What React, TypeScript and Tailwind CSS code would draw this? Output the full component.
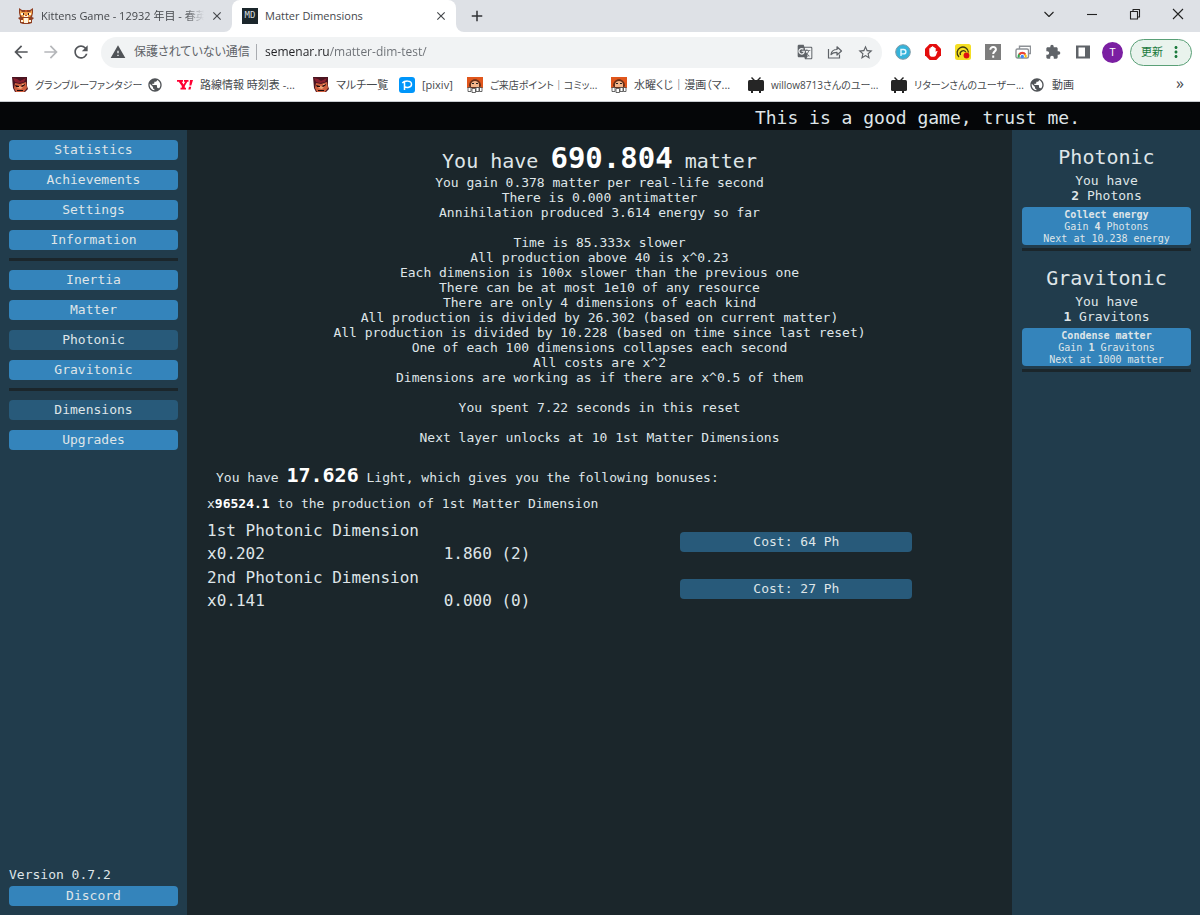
import type { ReactNode } from "react";
import {
  MdAdd,
  MdArrowBack,
  MdArrowForward,
  MdClose,
  MdExtension,
  MdGTranslate,
  MdMoreVert,
  MdPublic,
  MdRefresh,
  MdStarBorder,
  MdWarning,
} from "react-icons/md";

// ---------- Icons ----------

function CatIcon() {
  return (
    <svg viewBox="0 0 16 16" className="size-4 shrink-0">
      <path fill="#8f3f22" d="M1 0l3 2h8l3-2v5l-1 4 2 1-2 2v3l-3 1H5l-3-1v-3l-2-2 2-1-1-4z" />
      <path fill="#f0a04b" d="M2 2l2 2h8l2-2v4l-2 3H4L2 6zM5 10h6v4H5z" />
      <path fill="#fff3dc" d="M3 5h3v2H3zM10 5h3v2h-3zM6 7h4v2H6zM6 10h4v5H6zM3 12h2v2H3zM11 12h2v2h-2z" />
      <path fill="#c2512b" d="M7 2h2v2H7zM7 7h2v1H7z" />
      <path fill="#3b1a10" d="M5 5h1v2H5zM10 5h1v2h-1z" />
    </svg>
  );
}

function DemonIcon() {
  return (
    <svg viewBox="0 0 16 16" className="size-4 shrink-0">
      <path fill="#4a1420" d="M0 0h15v9l1 3-3 3H3l-2-4z" />
      <path fill="#d0603f" d="M3 6l5 1 6-2 1 6-3 4H4l-2-4z" />
      <path fill="#8c1f2e" d="M1 1l4 1 3 2 6-3-2 4-5 1-4-1z" />
      <path fill="#f0a67a" d="M5 11l2-2 4 1-2 2zM10 7h3v1h-3z" />
      <path fill="#1c0a0c" d="M3 8l4 1v1H4zM9 9l4-2v1l-3 2zM5 13h6v1H5z" />
    </svg>
  );
}

function YahooIcon() {
  return (
    <svg viewBox="0 0 16 16" className="size-4 shrink-0" fill="#ff0033">
      <path d="M0 3h6v1.800H4.800L6.500 7.500 8.200 4.800H7V3h4.500v1.800h-1.200L7.800 9v1.700H9V12.500H3.500v-1.800h1.300V9L1.800 4.800H0z" />
      <path d="M13 3h3l-1.700 5.500h-1.900zM12 9.800h2.200l-.7 2.700h-2.200z" />
    </svg>
  );
}

function PixivIcon() {
  return (
    <svg viewBox="0 0 16 16" className="size-4 shrink-0">
      <rect width="16" height="16" rx="3" fill="#0096fa" />
      <path d="M5.500 13V4.300M3.300 6c2-2.400 9.200-3 9.200 1.200 0 3.600-4.800 3.900-7 2.500" fill="none" stroke="#fff" strokeWidth="1.500" />
    </svg>
  );
}

function MangaIcon() {
  return (
    <svg viewBox="0 0 16 16" className="size-4 shrink-0">
      <path fill="#e0561c" d="M0 0h16v11H0z" />
      <path fill="#6a3018" d="M2 9c0-9 12-9 12 0l-2 2H4z" />
      <path fill="#f3b58a" d="M4 7c1-4 7-4 8 0v3H4z" />
      <path fill="#222" d="M5 6h2v1H5zM9 6h2v1H9z" />
      <path fill="#fff" stroke="#444" strokeWidth=".8" d="M1 10.500h3v4H1zM5 11.500h3.500v4H5zM9 10.500h3v4H9zM12.500 10.500h2.500v4h-2.500z" />
    </svg>
  );
}

function TvIcon() {
  return (
    <svg viewBox="0 0 16 16" className="size-4 shrink-0" fill="#252525">
      <rect x="0" y="3" width="16" height="11" rx="1.500" />
      <path d="M3 1l1-1 3 3-1 1zM13 1l-1-1-3 3 1 1zM3 14h2v2H3zM11 14h2v2h-2z" />
    </svg>
  );
}

function GlobeIcon() {
  return <MdPublic className="size-4 shrink-0 text-[#505357]" />;
}

function ShareIcon() {
  return (
    <svg viewBox="0 0 16 16" className="size-4" fill="none" stroke="#5f6368" strokeWidth="1.200">
      <path d="M1.500 5v9h11v-3.500" />
      <path d="M4 10.500c.5-3.500 2.500-5 6-5V2.800l4.500 4.200L10 11V8.300c-3 0-4.500.5-6 2.200z" strokeLinejoin="round" />
    </svg>
  );
}

// ---------- Browser window ----------

const extensions: { name: string; icon: ReactNode }[] = [
  {
    name: "Pixiv",
    icon: (
      <svg viewBox="0 0 16 16" className="size-4">
        <circle cx="8" cy="8" r="7.300" fill="#35b3da" stroke="#7f9aa5" strokeWidth="1" />
        <path d="M6 12V5.500h2.700a2.200 2.200 0 0 1 0 4.400H6" fill="none" stroke="#e5f8ff" strokeWidth="1.400" />
      </svg>
    ),
  },
  {
    name: "AdBlock",
    icon: (
      <svg viewBox="0 0 16 16" className="size-4">
        <path fill="#e40d0d" d="M4.700 0h6.600L16 4.700v6.600L11.300 16H4.700L0 11.300V4.700z" />
        <path fill="#fff" d="M4.300 7.500V4.300h1.300V3h1.300v-.8h1.300V3h1.300v1h1.200v4l.9-.9h1L11 11.300c-.8 2-5.800 2.300-6.500-.6z" />
      </svg>
    ),
  },
  {
    name: "Recorder",
    icon: (
      <svg viewBox="0 0 16 16" className="size-4">
        <rect width="16" height="16" rx="2.500" fill="#f5df25" />
        <path d="M4 13a5.700 5.700 0 1 1 9.500-4.500M5.500 11a3 3 0 0 1 5.300-2.800" fill="none" stroke="#3f3a12" strokeWidth="1.300" />
        <circle cx="11.500" cy="11.500" r="2.900" fill="#de1010" />
      </svg>
    ),
  },
  {
    name: "Help",
    icon: (
      <svg viewBox="0 0 16 16" className="size-4">
        <path fill="#7d7d7d" d="M0 0h16v16H0z" />
        <path d="M5.300 5.800c0-4 5.600-3.400 5.600-.4 0 2-2.700 2-2.700 4.600M8.200 11.500v2.200" fill="none" stroke="#fff" strokeWidth="2" />
      </svg>
    ),
  },
  {
    name: "Cast",
    icon: (
      <svg viewBox="0 0 16 16" className="size-4">
        <path d="M4.500 5V2.200h11v7.300h-2" fill="none" stroke="#8d9196" strokeWidth="1.400" />
        <rect x="1" y="5" width="12.500" height="9" rx="1.500" fill="#fff" stroke="#8d9196" strokeWidth="1.400" />
        <path d="M3.800 13.500a3.500 3.500 0 0 1 1.500-4" fill="none" stroke="#2da94f" strokeWidth="2" />
        <path d="M4.300 10.500a3.500 3.500 0 0 1 6 0" fill="none" stroke="#ea4335" strokeWidth="2.200" />
        <path d="M10 10.500a3.500 3.500 0 0 1 .7 3" fill="none" stroke="#fbbc05" strokeWidth="2" />
        <circle cx="7.300" cy="12.500" r="1.700" fill="#4285f4" />
      </svg>
    ),
  },
  { name: "拡張機能", icon: <MdExtension className="size-4 text-[#5f6368]" /> },
  {
    name: "サイドパネル",
    icon: (
      <svg viewBox="0 0 16 16" className="size-4">
        <path fillRule="evenodd" fill="#5f6368" d="M1 1.500h14v13H1zM3.500 3.500v9H10v-9z" />
      </svg>
    ),
  },
];

const bookmarks: { label: string; icon: ReactNode; className: string }[] = [
  { label: "グランブルーファンタジー", icon: <DemonIcon />, className: "w-[135px] text-[10px]" },
  { label: "", icon: <GlobeIcon />, className: "w-[30px]" },
  { label: "路線情報 時刻表 -...", icon: <YahooIcon />, className: "w-[136px] text-[11px]" },
  { label: "マルチ一覧", icon: <DemonIcon />, className: "w-[86px] text-[11px]" },
  { label: "[pixiv]", icon: <PixivIcon />, className: "w-[68px] text-[11px]" },
  { label: "ご来店ポイント｜コミッ...", icon: <MangaIcon />, className: "w-[144px] text-[10px]" },
  { label: "水曜くじ｜漫画（マ...", icon: <MangaIcon />, className: "w-[137px] text-[11px]" },
  { label: "willow8713さんのユー...", icon: <TvIcon />, className: "w-[143px] text-[10px]" },
  { label: "リターンさんのユーザー...", icon: <TvIcon />, className: "w-[138px] text-[10px]" },
  { label: "動画", icon: <GlobeIcon />, className: "w-[60px] text-[11px]" },
];

function TabStrip() {
  return (
    <div className="flex h-8 bg-white text-[11px] text-[#45484c]">
      <div className="flex w-[232px] shrink-0 items-center rounded-br-lg bg-[#dee1e6] pl-[18px]">
        <CatIcon />
        <span className="ml-[7px] w-[168px] mask-r-from-85% mask-r-to-97% whitespace-nowrap">
          Kittens Game - 12932 年目 - 春英
        </span>
        <button aria-label="タブを閉じる" className="ml-px">
          <MdClose className="size-[14px]" />
        </button>
      </div>
      <div className="w-[224px] shrink-0 bg-[#dee1e6]">
        <div className="flex h-full items-center rounded-t-lg bg-white pl-[10px]">
          <span className="flex size-4 items-center justify-center bg-[#1b262b] font-['DejaVu_Sans_Mono',monospace] text-[9px] text-[#d5dadd]">
            MD
          </span>
          <span className="ml-[7px] flex-1">Matter Dimensions</span>
          <button aria-label="タブを閉じる" className="mr-2">
            <MdClose className="size-[14px]" />
          </button>
        </div>
      </div>
      <div className="flex flex-1 items-center rounded-bl-lg bg-[#dee1e6] pl-3">
        <button aria-label="新しいタブ">
          <MdAdd className="size-[18px] text-[#303236]" />
        </button>
        <div className="mr-4 mb-1 ml-auto flex gap-[31px]">
          {[
            ["タブを検索", "M1.500 4l4.500 4.500L10.500 4"],
            ["最小化", "M1 6.500h10"],
            ["元に戻す", "M1.500 3.500h7v7.500h-7zM4 3.500V1.500h6.500V9H8.500"],
            ["閉じる", "M1 1l10 10M11 1L1 11"],
          ].map(([name, path]) => (
            <button key={name} aria-label={name}>
              <svg viewBox="0 0 12 12" className="size-3" fill="none" stroke="#222" strokeWidth="1.100" strokeLinejoin="round">
                <path d={path} />
              </svg>
            </button>
          ))}
        </div>
      </div>
    </div>
  );
}

function Toolbar() {
  return (
    <div className="flex h-10 items-center bg-white pr-2 pl-[11px]">
      <div className="flex w-[90px] gap-[10px] text-[#53565a]">
        <button aria-label="戻る">
          <MdArrowBack className="size-5" />
        </button>
        <button aria-label="進む" className="text-[#b5b7ba]">
          <MdArrowForward className="size-5" />
        </button>
        <button aria-label="再読み込み">
          <MdRefresh className="size-5" />
        </button>
      </div>
      <div className="flex h-[31px] min-w-0 flex-1 items-center rounded-full bg-[#f1f3f4] pr-2 pl-[9px] text-xs">
        <MdWarning className="size-4 shrink-0 text-[#505357]" />
        <span className="ml-2 w-[114px] shrink-0 whitespace-nowrap text-[#5f6368] [font-feature-settings:'palt']">
          保護されていない通信
        </span>
        <span className="mx-2 h-4 w-px shrink-0 bg-[#a9acb0]" />
        <input
          aria-label="アドレス"
          defaultValue="semenar.ru/matter-dim-test/"
          className="min-w-0 flex-1 bg-[linear-gradient(to_right,#202124_64px,#6b6f74_64px)] bg-clip-text text-transparent outline-none"
        />
        <div className="flex shrink-0 gap-[14px] text-[#5f6368]">
          <button aria-label="翻訳">
            <MdGTranslate className="size-4" />
          </button>
          <button aria-label="共有">
            <ShareIcon />
          </button>
          <button aria-label="ブックマーク">
            <MdStarBorder className="size-[17px]" />
          </button>
        </div>
      </div>
      <div className="ml-[13px] flex items-center gap-[14px]">
        {extensions.map((ext) => (
          <button key={ext.name} aria-label={ext.name}>
            {ext.icon}
          </button>
        ))}
      </div>
      <button className="ml-[11px] size-[21px] rounded-full bg-[#7b1fa2] text-[11px] text-white">T</button>
      <button className="ml-[7px] flex h-[27px] w-[62px] items-center justify-center gap-1 rounded-full border border-[#5aa077] bg-[#e9f3ed] pl-1 text-[11px] text-[#1b7a3d]">
        更新
        <MdMoreVert className="size-[18px]" />
      </button>
    </div>
  );
}

function BookmarkBar() {
  return (
    <div className="flex h-[30px] items-center border-b border-[#c9ccd0] bg-white pr-4 pb-[3px] pl-3 text-[#45484c] [font-feature-settings:'palt']">
      {bookmarks.map((b, i) => (
        <a
          key={i}
          href="#"
          aria-label={b.label || "ブックマーク"}
          className={`flex shrink-0 items-center gap-[7px] whitespace-nowrap ${b.className}`}
        >
          {b.icon}
          {b.label}
        </a>
      ))}
      <button aria-label="その他のブックマーク" className="ml-auto pb-1 text-base leading-4">
        »
      </button>
    </div>
  );
}

// ---------- Game ----------

const menus = [
  ["Statistics", "Achievements", "Settings", "Information"],
  ["Inertia", "Matter", "Photonic", "Gravitonic"],
  ["Dimensions", "Upgrades"],
];

const selected = ["Photonic", "Dimensions"];

const production = [
  ["You gain 0.378 matter per real-life second", "There is 0.000 antimatter", "Annihilation produced 3.614 energy so far"],
  [
    "Time is 85.333x slower",
    "All production above 40 is x^0.23",
    "Each dimension is 100x slower than the previous one",
    "There can be at most 1e10 of any resource",
    "There are only 4 dimensions of each kind",
    "All production is divided by 26.302 (based on current matter)",
    "All production is divided by 10.228 (based on time since last reset)",
    "One of each 100 dimensions collapses each second",
    "All costs are x^2",
    "Dimensions are working as if there are x^0.5 of them",
  ],
  ["You spent 7.22 seconds in this reset"],
  ["Next layer unlocks at 10 1st Matter Dimensions"],
];

const dimensions = [
  { name: "1st Photonic Dimension", mult: "x0.202", amount: "1.860 (2)", cost: "Cost: 64 Ph" },
  { name: "2nd Photonic Dimension", mult: "x0.141", amount: "0.000 (0)", cost: "Cost: 27 Ph" },
];

const layers = [
  { name: "Photonic", amount: "2", unit: "Photons", action: "Collect energy", gain: "4", next: "Next at 10.238 energy" },
  { name: "Gravitonic", amount: "1", unit: "Gravitons", action: "Condense matter", gain: "1", next: "Next at 1000 matter" },
];

function GameButton({ children, dim = false }: { children: ReactNode; dim?: boolean }) {
  return (
    <button className={`h-5 w-full rounded-sm leading-5 ${dim ? "bg-[#285a7a]" : "bg-[#3484bb]"}`}>{children}</button>
  );
}

function Sidebar() {
  return (
    <nav className="flex w-[187px] shrink-0 flex-col bg-[#213c4c] px-[9px] pt-[10px] pb-[9px]">
      {menus.map((menu, i) => (
        <div key={i}>
          {i > 0 && <hr className="mt-2 mb-[9px] border-t-3 border-[#1b262b]" />}
          <div className="flex flex-col gap-[10px]">
            {menu.map((item) => (
              <GameButton key={item} dim={selected.includes(item)}>
                {item}
              </GameButton>
            ))}
          </div>
        </div>
      ))}
      <p className="mt-auto mb-1">Version 0.7.2</p>
      <GameButton>Discord</GameButton>
    </nav>
  );
}

function Layers() {
  return (
    <aside className="w-[188px] shrink-0 bg-[#213c4c] pr-[9px] pl-[10px] text-center">
      {layers.map((layer) => (
        <section key={layer.name}>
          <h2 className="pt-[13px] pb-[2px] text-[20px] leading-[28px]">{layer.name}</h2>
          <p>You have</p>
          <p>
            <b>{layer.amount}</b> {layer.unit}
          </p>
          <button className="mt-1 block w-full rounded-sm bg-[#3484bb] pt-[2px] text-[10px] leading-[12px]">
            <b>{layer.action}</b>
            <br />
            Gain <b>{layer.gain}</b> {layer.unit}
            <br />
            {layer.next}
          </button>
          <hr className="mt-[3px] border-t-3 border-[#1b262b]" />
        </section>
      ))}
    </aside>
  );
}

function Main() {
  return (
    <main className="min-w-0 flex-1 px-5 pt-[11px]">
      <div className="text-center">
        <h1 className="h-[34px] text-[20px] leading-[34px]">
          You have <b className="text-[29px] text-white">690.804</b> matter
        </h1>
        <div className="flex flex-col gap-[15px]">
          {production.map((lines, i) => (
            <div key={i}>
              {lines.map((line) => (
                <p key={line}>{line}</p>
              ))}
            </div>
          ))}
        </div>
      </div>
      <p className="mt-4 h-7 pl-[9px] leading-[28px]">
        You have <b className="text-[20px] text-white">17.626</b> Light, which gives you the following bonuses:
      </p>
      <p className="mt-[7px]">
        x<b className="text-white">96524.1</b> to the production of 1st Matter Dimension
      </p>
      <div className="mt-[7px] -mr-1">
        {dimensions.map((d) => (
          <div key={d.name} className="grid h-[47px] grid-cols-[3fr_3fr_4fr] items-center text-[16px] leading-[23px]">
            <div>
              <p>{d.name}</p>
              <p>{d.mult}</p>
            </div>
            <p className="self-end">{d.amount}</p>
            <div className="w-[232px] text-[13px]">
              <GameButton dim>{d.cost}</GameButton>
            </div>
          </div>
        ))}
      </div>
    </main>
  );
}

export default function App() {
  return (
    <div className="flex min-h-screen flex-col bg-[#1b262b]">
      <header className="font-['Open_Sans','Noto_Sans_CJK_JP',sans-serif]">
        <TabStrip />
        <Toolbar />
        <BookmarkBar />
      </header>
      <div className="flex flex-1 flex-col font-['DejaVu_Sans_Mono',monospace] text-[13px] leading-[15px] text-[#dfe5e8]">
        <div className="h-7 bg-[#050608] pr-[120px] text-right text-[18px] leading-[32px]">This is a good game, trust me.</div>
        <div className="flex flex-1">
          <Sidebar />
          <Main />
          <Layers />
        </div>
      </div>
    </div>
  );
}
